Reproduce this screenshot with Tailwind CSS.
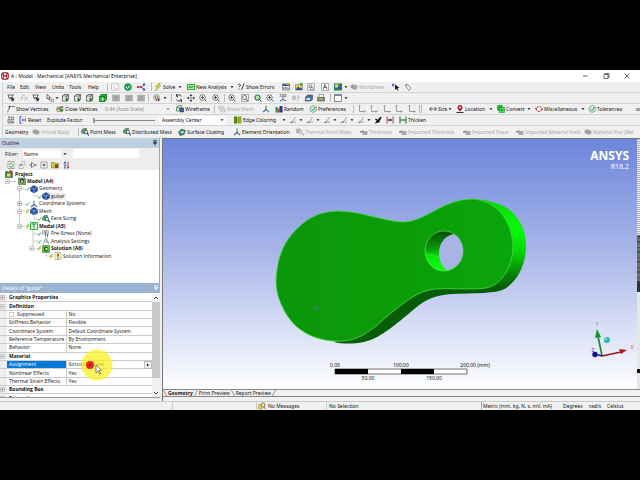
<!DOCTYPE html>
<html lang="en">

<head>
  <meta charset="UTF-8">
  <meta name="viewport" content="width=device-width, initial-scale=1.0">
  <title>A : Modal - Mechanical [ANSYS Mechanical Enterprise]</title>
  <script src="https://cdn.jsdelivr.net/npm/@tailwindcss/browser@4"></script>
</head>

<body class="bg-black h-screen py-[70px] flex flex-col overflow-hidden font-['Noto_Sans',sans-serif] text-[5px] leading-[8px] text-[#111]">
  <!-- icon sprite -->
  <svg class="hidden">
    <symbol id="caret" viewBox="0 0 8 8"><path d="M1 2.5h6L4 6z" fill="#111" /></symbol>
    <symbol id="panel" viewBox="0 0 16 16"><path d="M1 2h14v12H1z" fill="#fff" stroke="#999" /><path d="M4 5l3 3-3 3M8 11h4" stroke="#888" fill="none" /></symbol>
    <symbol id="ok" viewBox="0 0 16 16"><circle cx="8" cy="8" r="7.5" fill="#17a04a" /><path d="M4 8l3 3 5-6" stroke="#fff" stroke-width="2" fill="none" /></symbol>
    <symbol id="share" viewBox="0 0 16 16"><path d="M1 8h7M8 8l6-5M8 8l6 5" stroke="#2b4bb0" stroke-width="1.6" /><path d="M0 6h4v4H0zM6 6h4v4H6z" fill="#c32c4c" /><path d="M12 1h4v4h-4zM12 11h4v4h-4z" fill="#2b3fd0" /></symbol>
    <symbol id="bolt" viewBox="0 0 16 16"><path d="M10 0L3 8h4l-5 8 11-10H8l5-6z" fill="#f2d51c" stroke="#7a9a20" /></symbol>
    <symbol id="analysis" viewBox="0 0 16 16"><path d="M0 2h16v12H0z" fill="#2fae3a" /><path d="M2 4h12v8H2z" fill="#a9efab" /><path d="M3 10l3-4 3 4 3-4" stroke="#086b12" stroke-width="1.6" fill="none" /></symbol>
    <symbol id="query" viewBox="0 0 16 16"><path d="M2 4q3-4 5 0 0 2-3 4M4 11v2M9 14l5-13" stroke="#333" stroke-width="1.8" fill="none" /></symbol>
    <symbol id="chart" viewBox="0 0 16 16"><path d="M1 2h14v12H1z" fill="#fff" stroke="#335" /><path d="M1 2h14v4H1z" fill="#3656b8" /><path d="M4 8v5M8 7v6M12 9v4" stroke="#357" stroke-width="2" /><path d="M9 0h5v4H9z" fill="#d9a520" /></symbol>
    <symbol id="image" viewBox="0 0 16 16"><path d="M1 3h14v11H1z" fill="#e8d44f" stroke="#666" /><path d="M1 14l5-7 4 4 2-2 3 5z" fill="#22519b" /><path d="M10 0h5v5h-5z" fill="#3aa14a" /></symbol>
    <symbol id="figure" viewBox="0 0 16 16"><path d="M1 1h14v14H1z" fill="#eee" stroke="#777" /><path d="M4 4h5v5H4z" fill="none" stroke="#b33" /><path d="M7 8h5v5H7z" fill="none" stroke="#456" /></symbol>
    <symbol id="note" viewBox="0 0 16 16"><path d="M1 1h14v14H1z" fill="#fff" stroke="#666" /><path d="M4 13L8 3l4 10M5 9h6" stroke="#333" stroke-width="1.4" fill="none" /></symbol>
    <symbol id="capture" viewBox="0 0 16 16"><path d="M0 1h16v14H0z" fill="#2b7a52" /><path d="M2 3h7v6H2z" fill="#dfe94a" /><path d="M8 6h6v7H8z" fill="#3557c4" /></symbol>
    <symbol id="blob" viewBox="0 0 16 16"><path d="M1 5l5-3 4 2 5 1v5l-4 4-5-2-5-2z" fill="#aaa" /><path d="M5 5v6M9 5v7" stroke="#888" /></symbol>
    <symbol id="select" viewBox="0 0 16 16"><path d="M2 1v6M5 4H0" stroke="#2840c0" stroke-width="2" /><path d="M6 3v11l3-3 2 4 2-1-2-4h4z" fill="#111" /></symbol>
    <symbol id="tag" viewBox="0 0 16 16"><path d="M2 5l4-3 8 8-4 5z" fill="#e8eef2" stroke="#58798a" stroke-width="1.4" /><circle cx="5" cy="5" r="1" fill="#356" /></symbol>
    <symbol id="filter" viewBox="0 0 16 16"><path d="M1 2h13M3 2v5h8V2M5 7v3h4V7" stroke="#555" stroke-width="1.6" fill="none" /><path d="M9 7v8l3-2 2 2-1-4 3-1z" fill="#222" /></symbol>
    <symbol id="pick" viewBox="0 0 16 16"><path d="M1 13L5 3h4M3 8h4M9 6l6 7M15 6l-6 7" stroke="#aaa" stroke-width="1.4" fill="none" /></symbol>
    <symbol id="arrow" viewBox="0 0 16 16"><path d="M2 1v9l2-2 2 4 2-1-2-4h3z" fill="#fff" stroke="#222" stroke-width="1.2" /><path d="M10 10h5v5h-5z" fill="none" stroke="#444" /></symbol>
    <symbol id="vertex" viewBox="0 0 16 16"><path d="M1 4l3-3h9v9l-3 4H1zM1 4h9v10M10 4l3-3" fill="#e9efe6" stroke="#444" stroke-width="1.4" /><path d="M6 7l8 5-4 1-1 3z" fill="#116b18" /></symbol>
    <symbol id="cube" viewBox="0 0 16 16"><path d="M1 5l4-4h10v10l-4 4H1z" fill="#14c928" stroke="#145e18" stroke-width="1.4" /><path d="M1 5h10v10M11 5l4-4" stroke="#145e18" stroke-width="1.4" fill="none" /><path d="M5 7l7 4-4 1-1 3z" fill="#eee" /></symbol>
    <symbol id="graycube" viewBox="0 0 16 16"><path d="M1 2h14v12H1z" fill="#bbb" stroke="#999" /><path d="M4 5h8v7H4zM4 8h8M8 5v7" stroke="#888" fill="none" /></symbol>
    <symbol id="view" viewBox="0 0 16 16"><circle cx="7" cy="7" r="6" fill="#d4ecd2" stroke="#3c8a42" /><path d="M3 7l4-3 4 3-4 3zM7 10v4" stroke="#b22d38" stroke-width="1.6" fill="none" /><path d="M9 8l6 4-3 1-1 3z" fill="#236" /></symbol>
    <symbol id="rotate" viewBox="0 0 16 16"><path d="M13 5A6 6 0 0 0 3 4l3 2M3 4V0M3 11a6 6 0 0 0 10 1l-3-2M13 12v4" stroke="#333" stroke-width="2" fill="none" /></symbol>
    <symbol id="pan" viewBox="0 0 16 16"><path d="M8 0l3 4H5zM8 16l3-4H5zM0 8l4-3v6zM16 8l-4-3v6z" fill="#333" /><path d="M8 4v8M4 8h8" stroke="#555" stroke-width="1" /></symbol>
    <symbol id="zoom" viewBox="0 0 16 16"><circle cx="7" cy="7" r="5.5" fill="#fff" stroke="#444" stroke-width="1.5" /><path d="M4 7h6M7 4v6M11 11l4 4" stroke="#333" stroke-width="1.6" /></symbol>
    <symbol id="zoomg" viewBox="0 0 16 16"><circle cx="7" cy="7" r="5" fill="#b9e8b9" stroke="#23863a" stroke-width="2.4" /><path d="M11 11l4 4" stroke="#225" stroke-width="2" /></symbol>
    <symbol id="zoombox" viewBox="0 0 16 16"><path d="M1 1h14v14H1z" fill="#eee" stroke="#666" /><circle cx="7" cy="7" r="4" fill="#fff" stroke="#444" stroke-width="1.4" /><path d="M10 10l4 4" stroke="#333" stroke-width="1.6" /></symbol>
    <symbol id="iso" viewBox="0 0 16 16"><path d="M1 1h2v4H1M5 1h3v4H5M10 1h4v4h-4z" stroke="#333" fill="none" /><path d="M8 6v5M8 11l-6 3M8 11l6 3" stroke="#356a8c" stroke-width="2" /></symbol>
    <symbol id="hash" viewBox="0 0 16 16"><path d="M3 3L1 13M7 3L5 13M0 6h8M0 10h8M10 4h4v4h-3v5" stroke="#999" stroke-width="1.2" fill="none" /></symbol>
    <symbol id="planes" viewBox="0 0 16 16"><path d="M1 6l4-4h10v9l-4 3H1z" fill="#456fa4" stroke="#234" /><path d="M3 8h7v4H3z" fill="#dbe8f4" /></symbol>
    <symbol id="print" viewBox="0 0 16 16"><path d="M4 1h9v6H4z" fill="#fff" stroke="#444" /><path d="M1 7h14v7H1z" fill="#7a9a52" stroke="#333" /><path d="M4 10h8" stroke="#fff" /></symbol>
    <symbol id="window" viewBox="0 0 16 16"><path d="M1 1h14v14H1z" fill="#fff" stroke="#555" stroke-width="1.4" /><path d="M1 3h14" stroke="#6d8bbd" stroke-width="2" /></symbol>
    <symbol id="showv" viewBox="0 0 16 16"><path d="M1 15L5 3h9M5 3v5" stroke="#555" stroke-width="1.4" fill="none" /><circle cx="5" cy="3" r="1.6" fill="#333" /><circle cx="14" cy="3" r="1.4" fill="#c33" /></symbol>
    <symbol id="closev" viewBox="0 0 16 16"><path d="M2 4h5v9H2zM9 3h5v9H9z" fill="#ecd" stroke="#864" /><path d="M1 9l13-6" stroke="#362" stroke-width="2" /><path d="M8 8h6v5H8z" fill="#3b8b3b" /></symbol>
    <symbol id="wire" viewBox="0 0 16 16"><path d="M1 5l4-4h6v7l-4 4H1zM1 5h6v7" stroke="#386a4c" stroke-width="1.4" fill="#d4e5dc" /><path d="M9 6h6v8H8z" fill="#2e62a4" stroke="#123" /></symbol>
    <symbol id="mesh" viewBox="0 0 16 16"><path d="M2 2h5v5H2zM8 8h6v6H8zM2 11h5M11 2v5" fill="none" stroke="#aaa" stroke-width="1.4" /></symbol>
    <symbol id="axes" viewBox="0 0 16 16"><path d="M8 1v8" stroke="#24a64a" stroke-width="2.2" /><path d="M8 9l-6 5" stroke="#2c63d4" stroke-width="2.2" /><path d="M8 9l6 5" stroke="#2a93a0" stroke-width="2.2" /><circle cx="8" cy="9" r="1.7" fill="#c33" /></symbol>
    <symbol id="random" viewBox="0 0 16 16"><path d="M1 4h4v11H1z" fill="#1d9a35" /><path d="M5 7h4v8H5z" fill="#c7243b" /><path d="M9 2h6v13H9z" fill="#173a9c" /></symbol>
    <symbol id="prefs" viewBox="0 0 16 16"><path d="M3 4l6-3 6 4-1 7-6 3-6-4z" fill="#d8eee5" stroke="#4d8e73" stroke-width="1.4" /><path d="M5 8l3 3 5-7" stroke="#33945b" stroke-width="2" fill="none" /></symbol>
    <symbol id="plane" viewBox="0 0 16 16"><path d="M3 1v12h12" stroke="#888" stroke-width="1.6" fill="none" /><path d="M1 3l2-3 2 3M11 11l4 2-4 2" stroke="#999" stroke-width="1.2" fill="none" /></symbol>
    <symbol id="size" viewBox="0 0 16 16"><path d="M1 8h14M5 4L1 8l4 4M11 4l4 4-4 4" stroke="#333" stroke-width="1.5" fill="none" /></symbol>
    <symbol id="pin" viewBox="0 0 16 16"><path d="M8 13Q2 7 3 4q1-4 5-4t5 4q1 3-5 9z" fill="#a3162f" /><circle cx="8" cy="5" r="2" fill="#fff" /><path d="M1 15h14" stroke="#333" stroke-width="2" /></symbol>
    <symbol id="convert" viewBox="0 0 16 16"><path d="M0 3l3-3h7l2 3v9H3l-3-3z" fill="#1eb632" /><path d="M5 5h10v10H5z" fill="#42e04c" stroke="#117a1c" /><path d="M8 10h4" stroke="#064" stroke-width="2" /></symbol>
    <symbol id="misc" viewBox="0 0 16 16"><circle cx="8" cy="8" r="5" fill="none" stroke="#c04452" stroke-width="2.2" stroke-dasharray="4 2" /><path d="M0 6h4v3H0zM12 7h4v3h-4z" fill="#b55" /></symbol>
    <symbol id="explode" viewBox="0 0 16 16"><path d="M2 7h4v7H2zM8 2h5v5H8zM8 10h5v4H8zM4 1v4" stroke="#555" stroke-width="1.4" fill="none" /><path d="M2 2h4" stroke="#b44" stroke-width="2" /></symbol>
    <symbol id="reset" viewBox="0 0 16 16"><path d="M2 1v14M2 1h3M2 15h3" stroke="#3556c9" stroke-width="2" fill="none" /><path d="M13 8H6m3-3L6 8l3 3M13 5v6" stroke="#3d57a5" stroke-width="1.6" fill="none" /></symbol>
    <symbol id="edge" viewBox="0 0 16 16"><path d="M0 1h7v14H0z" fill="#5c8214" /><path d="M8 1h7v14H8z" fill="#8cae23" /></symbol>
    <symbol id="line" viewBox="0 0 16 16"><path d="M1 13h5L13 2M9 12h5" stroke="#888" stroke-width="1.5" fill="none" /><circle cx="6" cy="12" r="1.6" fill="#666" /></symbol>
    <symbol id="brush" viewBox="0 0 16 16"><path d="M1 15L13 1l2 3-6 9z" fill="#111" /><path d="M3 6l8 6" stroke="#111" stroke-width="3" /></symbol>
    <symbol id="gapr" viewBox="0 0 16 16"><path d="M2 1v14M14 1v14" stroke="#b03a48" stroke-width="2" /><path d="M4 8h8M4 8l3-2v4zM12 8l-3-2v4z" stroke="#444" /></symbol>
    <symbol id="gapg" viewBox="0 0 16 16"><path d="M2 1v14M14 1v14" stroke="#1b9448" stroke-width="2.4" /><path d="M3 8h10" stroke="#333" stroke-width="2" /></symbol>
    <symbol id="mass" viewBox="0 0 16 16"><path d="M1 5l4-4h6v8l-5 3-5-3z" fill="#5e9a7a" stroke="#264e3c" /><circle cx="10" cy="8" r="3.4" fill="#d5ecd9" stroke="#244" stroke-width="1.2" /><path d="M12 10l4 5" stroke="#123a9a" stroke-width="2.4" /></symbol>
    <symbol id="coat" viewBox="0 0 16 16"><path d="M1 8l6-6 8 3-3 8-8 2z" fill="#3a8c6a" stroke="#234" /><path d="M5 8l5-3 2 4-5 2z" fill="#b8e4ce" /></symbol>
    <symbol id="imp" viewBox="0 0 16 16"><path d="M0 6h5V3l4 5-4 4V9H0z" fill="#888" /><path d="M6 6h9v8H5z" fill="#aaa" /></symbol>
    <symbol id="massg" viewBox="0 0 16 16"><path d="M1 2h8v8H1z" fill="#bbb" stroke="#999" /><circle cx="10" cy="8" r="3" fill="#eee" stroke="#999" /><path d="M12 10l3 5" stroke="#999" stroke-width="2" /></symbol>
    <symbol id="check" viewBox="0 0 16 16"><path d="M2 10l4 4 8-10" stroke="#18a329" stroke-width="2.4" fill="none" /></symbol>
    <symbol id="project" viewBox="0 0 16 16"><path d="M1 3h5l1 2h8v10H1z" fill="#3d8a49" stroke="#214b26" /><path d="M4 7h7v6H4z" fill="#efd65c" /><path d="M8 1h7v6H8z" fill="#9c5142" /></symbol>
    <symbol id="model" viewBox="0 0 16 16"><path d="M1 2h14v13H1z" fill="#77a84f" stroke="#3d5c2a" /><path d="M4 5l4-2 4 2v5l-4 3-4-3z" fill="#274c7c" /><path d="M6 7h4v4H6z" fill="#e9de4d" /></symbol>
    <symbol id="solid" viewBox="0 0 16 16"><path d="M1 5l7-4 7 4v7l-7 4-7-4z" fill="#284fa3" stroke="#142a62" /><path d="M1 5l7 3 7-3M8 8v8" stroke="#9db6ea" stroke-width="1.4" fill="none" /></symbol>
    <symbol id="modal" viewBox="0 0 16 16"><path d="M1 1h14v14H1z" fill="#dff7df" stroke="#26b034" stroke-width="2" /><path d="M4 4h8M8 4v9" stroke="#129326" stroke-width="2" /></symbol>
    <symbol id="settings" viewBox="0 0 16 16"><path d="M2 14L8 2l6 12M4 10h8" stroke="#7494aa" stroke-width="1.6" fill="none" /><path d="M6 5l8 7" stroke="#a89f84" stroke-width="2" /></symbol>
    <symbol id="prestress" viewBox="0 0 16 16"><path d="M1 1h12v8H1z" fill="#ddd" stroke="#888" /><path d="M4 4h6M7 4v9M11 7v8" stroke="#5b6a74" stroke-width="1.6" /></symbol>
    <symbol id="solution" viewBox="0 0 16 16"><path d="M1 1h14v14H1z" fill="#53ba45" stroke="#236d22" /><path d="M4 5l4-2 4 2v6l-4 2-4-2z" fill="#1b6a2a" /><path d="M7 6h4v4H7z" fill="#f5ee60" /></symbol>
    <symbol id="info" viewBox="0 0 16 16"><path d="M2 1h12v14H2z" fill="#fbf7a8" stroke="#888" /><path d="M8 3v6M8 11v2" stroke="#223" stroke-width="2.4" /></symbol>
    <symbol id="messages" viewBox="0 0 16 16"><path d="M1 5h8v9H1z" fill="#e9d04c" stroke="#a68a1c" /><circle cx="10" cy="6" r="4" fill="#fbf3a0" stroke="#444" stroke-width="1.4" /><path d="M12 10l3 4" stroke="#777" stroke-width="2" /></symbol>
    <symbol id="refresh" viewBox="0 0 16 16"><path d="M2 1h12v14H2z" fill="#fff" stroke="#555" /><path d="M5 8a3 3 0 0 1 6-1M11 9a3 3 0 0 1-6 1" stroke="#1c9c34" stroke-width="2" fill="none" /></symbol>
    <symbol id="copy" viewBox="0 0 16 16"><path d="M2 6h8v9H2zM6 1h8v9" fill="#eee" stroke="#888" /><path d="M4 10l4-4" stroke="#555" stroke-width="2" /></symbol>
    <symbol id="expand" viewBox="0 0 16 16"><path d="M0 8h5M5 3v10l7-5zM12 8h4" fill="#fff" stroke="#444" stroke-width="1.4" /></symbol>
    <symbol id="plus" viewBox="0 0 16 16"><path d="M2 2h12v12H2z" fill="#fff" stroke="#888" stroke-width="1.6" /><path d="M5 8h6M8 5v6" stroke="#222" stroke-width="1.6" /></symbol>
    <symbol id="minus" viewBox="0 0 16 16"><path d="M2 2h12v12H2z" fill="#fff" stroke="#888" stroke-width="1.6" /><path d="M5 8h6" stroke="#222" stroke-width="1.6" /></symbol>
    <symbol id="folder" viewBox="0 0 16 16"><path d="M1 3h6l1 2h7v9H1z" fill="#d8c13c" stroke="#6f6420" /><path d="M8 7h6v7H8z" fill="#5c5540" /></symbol>
    <symbol id="sort" viewBox="0 0 16 16"><path d="M4 7L6 1l2 6M4 9h4l-4 5h4" stroke="#2b3fae" stroke-width="1.5" fill="none" /><path d="M12 1v13M10 11l2 4 2-4" stroke="#b3323f" stroke-width="1.8" fill="none" /></symbol>
    <symbol id="tack" viewBox="0 0 16 16"><path d="M5 1h6v7H5zM3 8h10M8 8v7" stroke="currentColor" stroke-width="2" fill="none" /></symbol>
    <symbol id="logo" viewBox="0 0 16 16"><rect x=".5" y=".5" width="15" height="15" rx="4" fill="#9c1420" /><circle cx="8" cy="8" r="5.5" fill="#fff" /><path d="M5 11V5l3 4 3-4v6" stroke="#9c1420" stroke-width="2" fill="none" /></symbol>
    <symbol id="slash" viewBox="0 0 8 12"><path d="M1 12L7 0" stroke="#333" /></symbol>
    <symbol id="backslash" viewBox="0 0 8 12"><path d="M1 0l6 12" stroke="#333" /></symbol>
  </svg>

  <div class="flex-1 min-h-0 flex flex-col bg-[#f0f0f0] overflow-hidden">
    <header class="h-[12px] shrink-0 bg-white flex items-center gap-[2px] px-px">
      <svg class="size-2"><use href="#logo" /></svg>
      <h1 class="flex-1 whitespace-nowrap">A : Modal - Mechanical [ANSYS Mechanical Enterprise]</h1>
      <div class="flex gap-[13px] pr-2">
        <button aria-label="Minimize"><svg class="size-2" viewBox="0 0 16 16"><path d="M4 8h9" stroke="#333" stroke-width="1.6" /></svg></button>
        <button aria-label="Restore"><svg class="size-2" viewBox="0 0 16 16"><path d="M4 5h8v8H4zM6 5V3h8v8h-2" stroke="#333" stroke-width="1.4" fill="none" /></svg></button>
        <button aria-label="Close"><svg class="size-2" viewBox="0 0 16 16"><path d="M3 3l10 10M13 3L3 13" stroke="#333" stroke-width="1.6" /></svg></button>
      </div>
    </header>

    <div class="h-[56px] shrink-0 grid grid-rows-5 border-b border-[#e8ecd8] pl-[2px]">
      <nav id="bar-menu" class="flex items-center pl-1 border-b border-l border-[#d4d4d4] overflow-hidden"></nav>
      <div id="bar-view" class="flex items-center pl-1 border-b border-l border-[#d4d4d4] overflow-hidden"></div>
      <div class="flex items-center pl-1 border-b border-l border-[#d4d4d4] overflow-hidden">
        <div id="bar-vertices" class="flex items-center"></div>
        <label class="w-[71px] shrink-0 flex items-center">
          <select aria-label="Auto scale" class="appearance-none flex-1 leading-[8px] text-[#888]"><option>0.44 (Auto Scale)</option></select>
          <svg class="size-1 opacity-50 mr-[6px]"><use href="#caret" /></svg>
        </label>
        <div id="bar-display" class="flex items-center"></div>
      </div>
      <div class="flex items-center pl-1 border-b border-l border-[#d4d4d4] overflow-hidden">
        <div id="bar-explode" class="flex items-center"></div>
        <label for="explode-factor" class="w-[46px] shrink-0">Explode Factor:</label>
        <input id="explode-factor" type="range" value="0" min="0" max="100" class="appearance-none w-[62px] h-px shrink-0 bg-[#888] [&::-webkit-slider-thumb]:appearance-none [&::-webkit-slider-thumb]:w-[2px] [&::-webkit-slider-thumb]:h-[5px] [&::-webkit-slider-thumb]:bg-[#999]">
        <label class="w-[67px] ml-[4px] mr-[8px] shrink-0 flex items-center bg-white pl-[3px] pr-[2px]">
          <select aria-label="Explode center" class="appearance-none flex-1 leading-[9px]"><option>Assembly Center</option></select>
          <svg class="size-1"><use href="#caret" /></svg>
        </label>
        <div id="bar-edges" class="flex items-center"></div>
      </div>
      <div id="bar-geometry" class="flex items-center pl-[2px] border-l border-[#d4d4d4] overflow-hidden"></div>
    </div>

    <main class="flex-1 min-h-0 flex">
      <aside class="w-40 shrink-0 flex flex-col font-['Open_Sans','Noto_Sans',sans-serif]">
        <section class="flex-1 min-h-0 flex flex-col border-r border-[#9aa5b5]">
          <h2 class="h-[10px] shrink-0 bg-[#bfcfe2] flex items-center justify-between pl-[2px] pr-px">Outline
            <svg class="size-[6px]"><use href="#tack" /></svg>
          </h2>
          <div class="h-[11px] shrink-0 flex items-center bg-[#eee] pl-[5px] pr-5">
            <label for="filter-by" class="w-[18px]">Filter:</label>
            <select id="filter-by" class="appearance-none w-[38px] bg-white leading-[8px] pl-px"><option>Name</option></select>
            <svg class="size-1 mx-[2px]"><use href="#caret" /></svg>
            <input aria-label="Filter text" class="ml-1 flex-1 min-w-0 h-[9px] bg-white">
          </div>
          <div class="h-[11px] shrink-0 flex items-center gap-[3px] bg-[#eee] pl-[7px]">
            <button aria-label="Refresh"><svg class="size-2"><use href="#refresh" /></svg></button>
            <button aria-label="Copy"><svg class="size-2"><use href="#copy" /></svg></button>
            <button aria-label="Expand"><svg class="size-2"><use href="#expand" /></svg></button>
            <button aria-label="Expand all"><svg class="size-2"><use href="#plus" /></svg></button>
            <button aria-label="Folder"><svg class="size-2"><use href="#folder" /></svg></button>
            <button aria-label="Sort"><svg class="size-2"><use href="#sort" /></svg></button>
          </div>
          <div class="flex-1 min-h-0 bg-white">
            <div class="relative h-[90px]">
              <svg class="absolute inset-0 w-40 h-[90px]" viewBox="0 0 160 90" fill="none" stroke="#aaa" stroke-width=".6">
                <path d="M8 11.5h9M19.500 15v41M20 19h5M20 34h5M20 41h5M20 56h5M34 23v3h5M34 45v4h5M33 60v18M33 64h7M33 71h7M33 79h5M46 83v3h6" />
              </svg>
              <ul id="tree" class="relative h-full grid grid-rows-12"></ul>
            </div>
          </div>
        </section>

        <section class="h-[115px] shrink-0 flex flex-col border-b border-[#999]">
          <h2 class="h-[10px] shrink-0 bg-[#9bb4d2] text-white flex items-center justify-between pl-[2px] pr-px">Details of "guitar"
            <svg class="size-[6px]"><use href="#tack" /></svg>
          </h2>
          <div class="flex-1 min-h-0 flex overflow-hidden bg-white pt-px">
            <div class="flex-1 min-h-0 overflow-hidden">
              <table class="w-full h-[109px] table-fixed border-collapse leading-[7px]">
                <colgroup><col class="w-[7px]"><col class="w-[59px]"><col></colgroup>
                <tbody id="details"></tbody>
              </table>
            </div>
            <div class="w-2 bg-[#f0f0f0] flex flex-col items-center justify-between">
              <svg class="size-2" viewBox="0 0 16 16"><path d="M4 10l4-4 4 4" stroke="#444" stroke-width="2" fill="none" /></svg>
              <div class="w-full h-[76px] bg-[#c8c8c8]"></div>
              <svg class="size-2 mt-auto" viewBox="0 0 16 16"><path d="M4 6l4 4 4-4" stroke="#444" stroke-width="2" fill="none" /></svg>
            </div>
          </div>
        </section>
        <div class="h-[3px] shrink-0"></div>
      </aside>

      <section class="flex-1 min-w-0 flex flex-col ml-[2px] border-l border-[#777]">
        <svg class="flex-1 min-h-0 w-full border-t border-[#777] bg-linear-to-b from-[#6c86da] via-[#a9b6e8] via-45% to-white border-r-0" viewBox="163 139 477 250">
          <defs>
            <linearGradient id="face" x1="0" y1="0" x2="1" y2="0"><stop offset="0" stop-color="#0c960c" /><stop offset=".5" stop-color="#0b9c07" /><stop offset="1" stop-color="#0aa60b" /></linearGradient>
            <linearGradient id="side" gradientUnits="userSpaceOnUse" x1="0" y1="200" x2="0" y2="292"><stop offset="0" stop-color="#0ad80a" /><stop offset=".3" stop-color="#05fa05" /><stop offset=".55" stop-color="#05d905" /><stop offset=".8" stop-color="#078607" /><stop offset="1" stop-color="#064e06" /></linearGradient>
            <linearGradient id="bore" x1="0" y1="0" x2="0" y2="1"><stop offset="0" stop-color="#064b06" /><stop offset=".45" stop-color="#0a9b0a" /><stop offset=".65" stop-color="#06e806" /><stop offset="1" stop-color="#10ff10" /></linearGradient>
          </defs>
          <path d="M472 199C486 199 498 203 507 208C520 217 526 231 526 246C526 266 516 284 502 290C497 292 491 292 486 292L480 280L500 220Z" fill="url(#side)" />
          <path d="M488 288Q500 284 506 288Q498 292 484 293L452 294C437 295 428 298 418 306C398 322 382 338 364 342C353 344 342 344 334 342L362 330L430 280Z" fill="#075c07" />
          <path d="M276 280C277 260 282 246 292 234C304 220 318 211 338 211C361 211 382 221 403 222C425 222 443 199 472 199C497 200 512 221 513 246C513 268 500 286 486 288C473 290 455 288 436 289C421 290 411 298 400 306C385 317 373 331 359 337C348 342 337 342 325 340C305 336 293 326 285 312C279 301 276 292 276 280Z" fill="url(#face)" stroke="#46dc46" stroke-width=".8" />
          <ellipse cx="444" cy="251" rx="19" ry="20" fill="url(#bore)" stroke="#6be66b" stroke-width=".6" />
          <path d="M454 234C444 236 439 244 439 253C439 261 442 267 447 270C456 269 463 261 463 251C463 243 459 237 454 234Z" fill="#a9b4e5" />
          <path d="M426 254l13 3" stroke="#64e864" stroke-width=".5" />
          <path d="M316.500 305v6M313.500 308h6" stroke="#4a8a70" stroke-width=".7" />

          <text x="629" y="160" text-anchor="end" font-size="12" font-weight="700" fill="#fff">ANSYS</text>
          <text x="629" y="169" text-anchor="end" font-size="7" fill="#fff">R18.2</text>

          <g fill="#111" font-size="5" text-anchor="middle">
            <path d="M335 369h132v5H335z" fill="#fff" stroke="#333" stroke-width=".7" />
            <path d="M335 369h33v5h-33zM401 369h33v5h-33z" fill="#000" />
            <text x="335" y="367">0.00</text>
            <text x="401" y="367">100.00</text>
            <text x="475" y="367">200.00 (mm)</text>
            <text x="368" y="380">50.00</text>
            <text x="434" y="380">150.00</text>
          </g>

          <path d="M602 356l-4-20" stroke="#138a24" stroke-width="1.6" />
          <path d="M597 329l4 8-6 1z" fill="#14922a" />
          <path d="M602 356l19-4" stroke="#9c1717" stroke-width="1.6" />
          <path d="M627 350l-8-1 2 5z" fill="#b01c1c" />
          <path d="M602 356l-7-2" stroke="#1515a0" stroke-width="1.4" />
          <circle cx="595" cy="354.500" r="2.700" fill="#10109c" />
          <circle cx="607" cy="340" r="3" fill="#2cb9b4" />
          <circle cx="606" cy="339" r="1" fill="#8be5e0" />
          <g font-size="5" text-anchor="middle">
            <text x="597" y="326" fill="#3fb04a">Y</text>
            <text x="632" y="349" fill="#e04848">X</text>
            <text x="593" y="352" fill="#3a3ac0">Z</text>
          </g>

          <!-- desktop behind the window edge -->
          <path d="M637 139h3v250h-3z" fill="#e6e6e2" />
          <path d="M638.500 139v96" stroke="#b9b5aa" stroke-width="3" stroke-dasharray="1 1" />
          <path d="M637 235h3v57h-3z" fill="#6d706c" />
          <path d="M638.500 236v54" stroke="#3d5a52" stroke-width="3" stroke-dasharray="2 3" />
          <path d="M638.500 246v36" stroke="#a3625c" stroke-width="3" stroke-dasharray="1 9" />
          <path d="M637 281h3v11h-3z" fill="#333" />
          <path d="M637 369h3v4h-3z" fill="#111" />
        </svg>
        <div class="h-2 shrink-0 flex items-center border-y border-[#888] leading-[6px] whitespace-nowrap">
          <svg class="w-1 h-[6px]"><use href="#backslash" /></svg>
          <a href="#geometry" class="font-bold px-px">Geometry</a>
          <svg class="w-1 h-[6px]"><use href="#slash" /></svg>
          <a href="#print" class="px-px">Print Preview</a>
          <svg class="w-1 h-[6px]"><use href="#backslash" /></svg>
          <a href="#report" class="px-px">Report Preview</a>
          <svg class="w-1 h-[6px]"><use href="#slash" /></svg>
        </div>
        <div class="h-1 shrink-0"></div>
      </section>
    </main>

    <footer class="h-[9px] shrink-0 flex items-center border-t border-[#ccc] whitespace-nowrap">
      <div class="w-[173px] h-full border-r border-[#ccc]"></div>
      <div class="w-[84px] h-full border-r border-[#ccc]"></div>
      <div class="w-[70px] h-full flex items-center gap-[2px] border-r border-[#ccc] pl-px">
        <svg class="size-2"><use href="#messages" /></svg>No Messages
      </div>
      <div class="flex-1 pl-[2px]">No Selection</div>
      <div class="w-[82px] border-l border-[#aaa] pl-px">Metric (mm, kg, N, s, mV, mA)</div>
      <div class="w-[26px]">Degrees</div>
      <div class="w-[18px]">rad/s</div>
      <div class="w-[33px]">Celsius</div>
    </footer>
  </div>

  <script>
    // [width, kind or icon, label, state]
    const bars = {
      'bar-menu': [
        ['w-[13px]', '', 'File'], ['w-[15px]', '', 'Edit'], ['w-[17px]', '', 'View'], ['w-[17px]', '', 'Units'], ['w-[19px]', '', 'Tools'], ['w-[19px]', '', 'Help'],
        ['w-[4px]', 'sep'], ['w-[13px]', 'panel'], ['w-[13px]', 'ok'], ['w-[14px]', 'share'], ['w-[3px]', 'sep'],
        ['w-[24px]', 'bolt', 'Solve'], ['w-[9px]', 'caret'], ['w-[43px]', 'analysis', 'New Analysis'], ['w-[7px]', 'caret'], ['w-[45px]', 'query', 'Show Errors'],
        ['w-[13px]', 'chart'], ['w-[12px]', 'image'], ['w-[14px]', 'figure'], ['w-[13px]', 'note'], ['w-[10px]', 'capture'], ['w-[6px]', 'caret'],
        ['w-[42px]', 'blob', 'Worksheet', 'off'], ['w-[12px]', 'select'], ['w-[12px]', 'tag']
      ],
      'bar-view': [
        ['w-[13px]', 'filter'], ['w-[12px]', 'pick'], ['w-[14px]', 'filter'], ['w-[9px]', 'arrow'], ['w-[7px]', 'caret'],
        ['w-[12px]', 'vertex'], ['w-[12px]', 'vertex'], ['w-[13px]', 'vertex', '', 'on'], ['w-[13px]', 'cube', '', 'on'], ['w-[13px]', 'graycube'], ['w-[12px]', 'graycube'], ['w-[11px]', 'graycube'],
        ['w-[5px]', 'sep'], ['w-[10px]', 'view'], ['w-[8px]', 'caret'], ['w-[4px]', 'sep'],
        ['w-[12px]', 'rotate'], ['w-[12px]', 'pan'], ['w-[13px]', 'zoom'], ['w-[12px]', 'zoom'], ['w-[4px]', 'sep'],
        ['w-[13px]', 'zoom'], ['w-[13px]', 'zoombox'], ['w-[12px]', 'zoomg'], ['w-[13px]', 'zoom'], ['w-[13px]', 'iso'], ['w-[13px]', 'hash'], ['w-[12px]', 'planes'], ['w-[13px]', 'print'],
        ['w-[4px]', 'sep'], ['w-[10px]', 'window'], ['w-[8px]', 'caret']
      ],
      'bar-vertices': [['w-[49px]', 'showv', 'Show Vertices'], ['w-[49px]', 'closev', 'Close Vertices']],
      'bar-display': [
        ['w-[38px]', 'wire', 'Wireframe'], ['w-[4px]', 'sep'], ['w-[44px]', 'mesh', 'Show Mesh', 'off'], ['w-[13px]', 'axes'], ['w-[34px]', 'random', 'Random'], ['w-[44px]', 'prefs', 'Preferences'],
        ['w-[5px]', 'sep'], ['w-[12px]', 'plane'], ['w-[13px]', 'plane'], ['w-[12px]', 'plane'], ['w-[13px]', 'plane'], ['w-[11px]', 'plane'],
        ['w-[2px]', 'sep'], ['w-[8px]', 'sep'], ['w-[19px]', 'size', 'Size'], ['w-[8px]', 'caret'], ['w-[33px]', 'pin', 'Location'], ['w-[8px]', 'caret'],
        ['w-[30px]', 'convert', 'Convert'], ['w-[8px]', 'caret'], ['w-[46px]', 'misc', 'Miscellaneous'], ['w-[7px]', 'caret'], ['w-[48px]', 'prefs', 'Tolerances'], ['w-[6px]', '', 'or']
      ],
      'bar-explode': [['w-[12px]', 'explode'], ['w-[28px]', 'reset', 'Reset']],
      'bar-edges': [
        ['w-[48px]', 'edge', 'Edge Coloring'], ['w-[7px]', 'caret'], ['w-[10px]', 'line'], ['w-[7px]', 'caret'], ['w-[10px]', 'line'], ['w-[7px]', 'caret'], ['w-[10px]', 'line'], ['w-[7px]', 'caret'],
        ['w-[10px]', 'line'], ['w-[7px]', 'caret'], ['w-[10px]', 'line'], ['w-[7px]', 'caret'], ['w-[12px]', 'brush'], ['w-[13px]', 'gapr'], ['w-[34px]', 'gapg', 'Thicken']
      ],
      'bar-geometry': [
        ['w-[27px]', '', 'Geometry'], ['w-[46px]', 'blob', 'Virtual Body', 'off'], ['w-[3px]', 'sep'], ['w-[42px]', 'mass', 'Point Mass'], ['w-[55px]', 'mass', 'Distributed Mass'],
        ['w-[55px]', 'coat', 'Surface Coating'], ['w-[63px]', 'axes', 'Element Orientation'], ['w-[64px]', 'massg', 'Thermal Point Mass', 'off'], ['w-[39px]', 'imp', 'Thickness', 'off'],
        ['w-[64px]', 'imp', 'Imported Thickness', 'off'], ['w-[53px]', 'imp', 'Imported Trace', 'off'], ['w-[68px]', 'imp', 'Imported Material Field', 'off'], ['w-[80px]', 'blob', 'Material Plot (Bet', 'off']
      ]
    };

    const icon = (name, size = 'size-2') => `<svg class="${size} shrink-0"><use href="#${name}" /></svg>`;

    for (const id in bars) {
      document.getElementById(id).innerHTML = bars[id].map(([width, kind, label = '', state]) => {
        if (kind === 'sep') return `<span class="${width} shrink-0 h-2 border-l border-[#bbb]"></span>`;
        if (kind === 'caret') return `<button aria-label="More" class="${width} shrink-0">${icon('caret', 'size-1')}</button>`;
        const color = state === 'off' ? 'text-[#aaa]' : '';
        const image = kind ? icon(kind, state === 'on' ? 'size-2 bg-[#cde6c8]' : 'size-2') : '';
        return `<button aria-label="${label || kind}" class="${width} ${color} shrink-0 flex items-center gap-px whitespace-nowrap text-left">${image}${label}</button>`;
      }).join('');
    }

    // [indent, toggle, mark, icon, label, label style]
    const tree = [
      ['pl-[5px]', 'minus', '', 'model', 'Model (A4)', 'font-bold'],
      ['pl-[17px]', 'minus', 'check', 'solid', 'Geometry', ''],
      ['pl-[29px]', '', 'check', 'solid', 'guitar', 'bg-[#eee]'],
      ['pl-[17px]', 'plus', 'check', 'axes', 'Coordinate Systems', ''],
      ['pl-[17px]', 'minus', 'bolt', 'solid', 'Mesh', ''],
      ['pl-[29px]', '', 'check', 'mass', 'Face Sizing', ''],
      ['pl-[17px]', 'minus', 'bolt', 'modal', 'Modal (A5)', 'font-bold'],
      ['pl-[29px]', '', 'check', 'prestress', 'Pre-Stress (None)', ''],
      ['pl-[29px]', '', 'check', 'settings', 'Analysis Settings', ''],
      ['pl-[29px]', 'minus', 'bolt', 'solution', 'Solution (A6)', 'font-bold'],
      ['pl-[41px]', '', 'bolt', 'info', 'Solution Information', '']
    ];
    document.getElementById('tree').innerHTML =
      `<li class="flex items-center gap-[2px] pl-[5px] font-bold">${icon('project')}Project</li>` +
      tree.map(([indent, toggle, mark, image, label, style]) => `
        <li class="${indent} flex items-center whitespace-nowrap leading-[7px]">
          <span class="w-2 flex">${toggle ? icon(toggle, 'size-[5px]') : ''}</span>
          <span class="w-[5px] flex">${mark ? icon(mark, 'size-[5px]') : ''}</span>
          ${icon(image)}
          <span class="${style} px-px">${label}</span>
        </li>`).join('');

    const details = [
      ['Graphics Properties', null, 'plus'],
      ['Definition', null, 'minus'],
      ['Suppressed', 'No'],
      ['Stiffness Behavior', 'Flexible'],
      ['Coordinate System', 'Default Coordinate System'],
      ['Reference Temperature', 'By Environment'],
      ['Behavior', 'None'],
      ['Material', null, 'minus'],
      ['Assignment', 'Structural Steel'],
      ['Nonlinear Effects', 'Yes'],
      ['Thermal Strain Effects', 'Yes'],
      ['Bounding Box', null, 'plus'],
      ['Properties', null, 'plus']
    ];
    const pointer = `
      <button aria-label="Choose material" class="absolute right-0 top-0 w-2 h-2 flex items-center justify-center bg-[#eee] border border-[#bbb]"><svg class="size-1" viewBox="0 0 8 8"><path d="M2 1l4 3-4 3z" fill="#111" /></svg></button>
      <svg class="absolute left-[14px] -top-3 size-8 pointer-events-none z-10" viewBox="0 0 32 32">
        <circle cx="16" cy="16" r="15.500" fill="#fbf01c" fill-opacity=".72" />
        <circle cx="9" cy="16" r="4" fill="#e8281c" /><circle cx="9" cy="16" r="1.500" fill="#a81c14" />
        <path d="M15 16v8l2-2 1.500 3 1-.5-1.500-3h2.500z" fill="#fff" stroke="#444" stroke-width=".6" />
      </svg>`;
    document.getElementById('details').innerHTML = details.map(([name, value, toggle]) => {
      if (value === null) {
        return `<tr class="border-b border-[#ccc]"><td class="bg-[#eee] p-0">${icon(toggle, 'size-[5px]')}</td><th colspan="2" class="p-0 pl-[2px] text-left font-bold">${name}</th></tr>`;
      }
      const active = name === 'Assignment';
      const box = name === 'Suppressed' ? '<span class="flex items-center gap-[3px]"><input id="suppressed" type="checkbox" class="appearance-none size-[5px] border border-[#ccc]"><label for="suppressed">Suppressed</label></span>' : name;
      return `<tr class="border-b border-[#ccc]">
        <td class="bg-[#eee] p-0"></td>
        <th class="${active ? 'bg-[#0078d7] text-white' : ''} p-0 pl-[2px] text-left font-normal whitespace-nowrap border-r border-[#ccc]">${box}</th>
        <td class="relative p-0 pl-[2px] whitespace-nowrap">${value}${active ? pointer : ''}</td>
      </tr>`;
    }).join('');
  </script>
</body>

</html>
